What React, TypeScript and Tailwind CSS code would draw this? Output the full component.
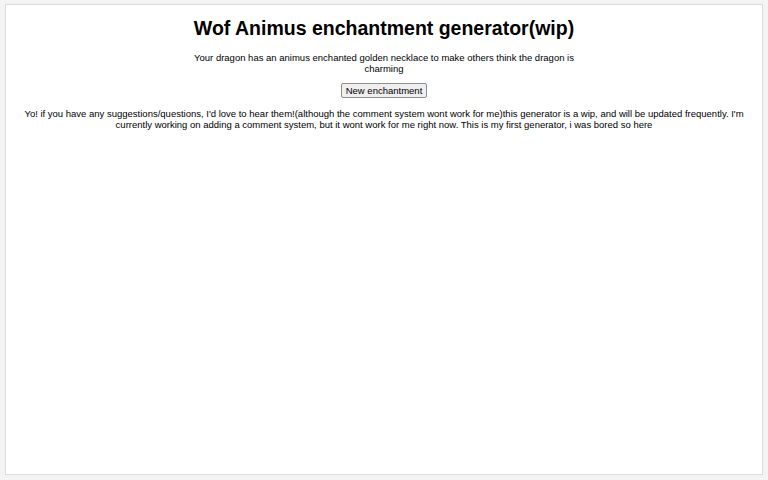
import React, { useState } from "react";

const enchantments = [
    "Your dragon has an animus enchanted golden necklace to make others think the dragon is charming",
];

const App: React.FC = () => {
    const [index, setIndex] = useState<number>(0);

    return (
        <div className="min-h-[480px] bg-[#f4f4f4] p-[4px_5px_4px_5px] font-['Liberation_Sans',Arial,sans-serif] text-black">
            <div className="h-[471px] w-[758px] border border-[#dcdcdc] bg-white px-[15px] pt-[11px] text-center">
                <h1 className="text-[19.5px] font-bold leading-[24px]">Wof Animus enchantment generator(wip)</h1>
                <p className="mx-auto mt-[12px] max-w-[392px] text-[9.5px] leading-[11px]">
                    {enchantments[index]}
                </p>
                <button
                    className="mt-[9px] rounded-[2px] border border-[#8f8f8f] bg-[#efefef] px-[4px] py-[1px] text-[9.5px] leading-[11px]"
                    onClick={() => setIndex((index + 1) % enchantments.length)}
                >
                    New enchantment
                </button>
                <p className="mt-[7px] text-[9.5px] leading-[11px]">
                    Yo! if you have any suggestions/questions, I'd love to hear them!(although the comment system wont work for me)this generator is a wip, and will be updated frequently. I'm currently working on adding a comment system, but it wont work for me right now. This is my first generator, i was bored so here
                </p>
            </div>
        </div>
    );
};

export default App;
